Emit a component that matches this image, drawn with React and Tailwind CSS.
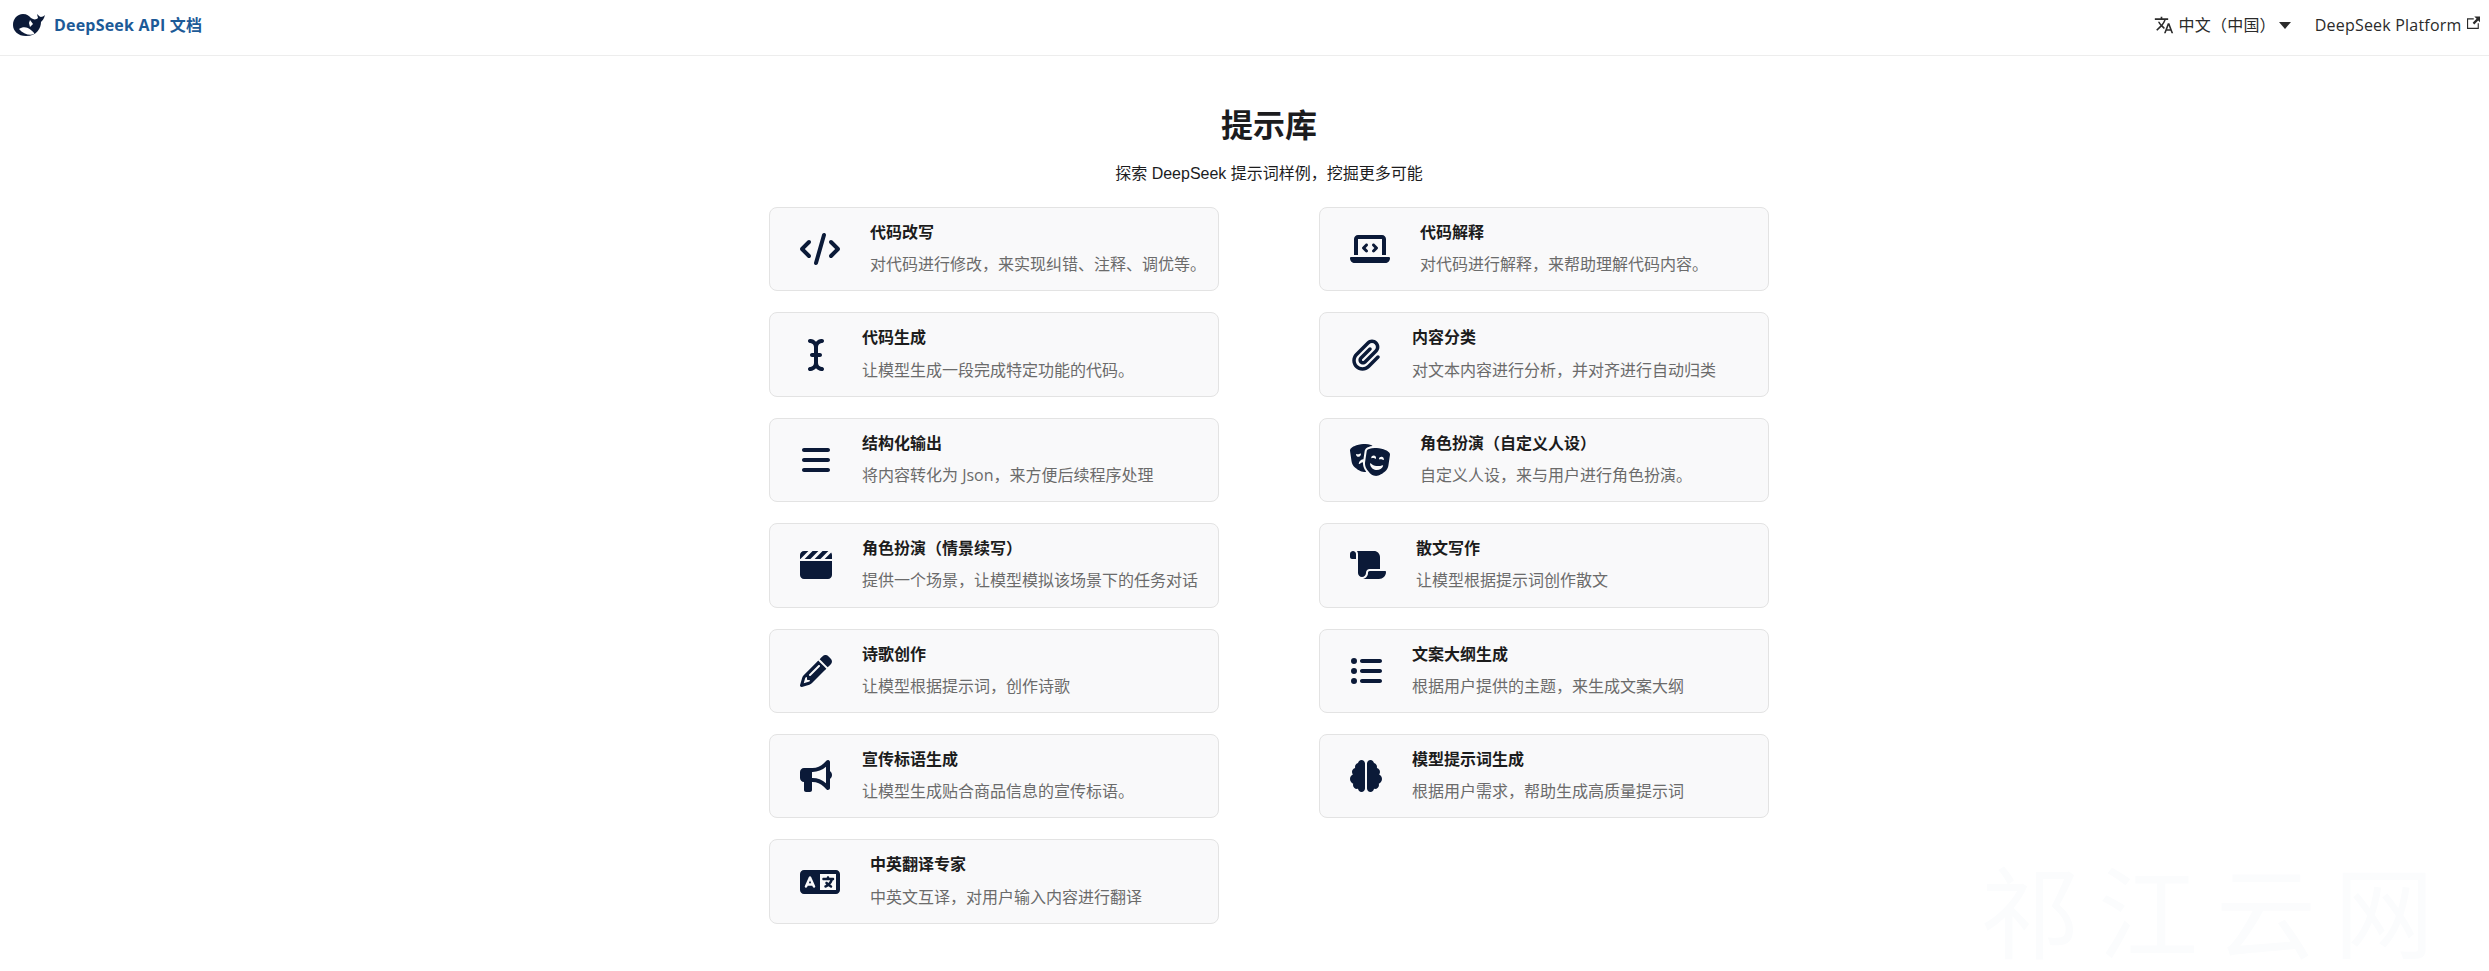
import { FaCode, FaLaptopCode, FaICursor, FaPaperclip, FaBars, FaMasksTheater, FaClapperboard, FaScroll, FaPencil, FaListUl, FaBullhorn, FaBrain, FaLanguage } from 'react-icons/fa6'

const prompts = [
  { icon: FaCode, w: 'w-[40px]', title: '代码改写', desc: '对代码进行修改，来实现纠错、注释、调优等。' },
  { icon: FaLaptopCode, w: 'w-[40px]', title: '代码解释', desc: '对代码进行解释，来帮助理解代码内容。' },
  { icon: FaICursor, w: 'w-[32px]', title: '代码生成', desc: '让模型生成一段完成特定功能的代码。' },
  { icon: FaPaperclip, w: 'w-[32px]', title: '内容分类', desc: '对文本内容进行分析，并对齐进行自动归类' },
  { icon: FaBars, w: 'w-[32px]', title: '结构化输出', desc: '将内容转化为 Json，来方便后续程序处理' },
  { icon: FaMasksTheater, w: 'w-[40px]', title: '角色扮演（自定义人设）', desc: '自定义人设，来与用户进行角色扮演。' },
  { icon: FaClapperboard, w: 'w-[32px]', title: '角色扮演（情景续写）', desc: '提供一个场景，让模型模拟该场景下的任务对话' },
  { icon: FaScroll, w: 'w-[36px]', title: '散文写作', desc: '让模型根据提示词创作散文' },
  { icon: FaPencil, w: 'w-[32px]', title: '诗歌创作', desc: '让模型根据提示词，创作诗歌' },
  { icon: FaListUl, w: 'w-[32px]', title: '文案大纲生成', desc: '根据用户提供的主题，来生成文案大纲' },
  { icon: FaBullhorn, w: 'w-[32px]', title: '宣传标语生成', desc: '让模型生成贴合商品信息的宣传标语。' },
  { icon: FaBrain, w: 'w-[32px]', title: '模型提示词生成', desc: '根据用户需求，帮助生成高质量提示词' },
  { icon: FaLanguage, w: 'w-[40px]', title: '中英翻译专家', desc: '中英文互译，对用户输入内容进行翻译' },
]

function Logo() {
  return (
    <svg viewBox="0 0 32 22" className="w-[32px] h-[22px] shrink-0">
      <path fill="#0b1a38" d="M0 11C0 5 4 0 10 0c4 0 6 2 8 4l2 1c2 1 4 0 5-1L24 0c2 2 3 3 4 3s3-1 4-2c-1 4-3 6-4 7 0 6-4 14-15 14C5 22 0 17 0 11z" />
      <path fill="#fff" d="M6 15c4-3 9-2 12 1 2 2 4 3 3 4-4 2-11 0-15-5z" />
      <path fill="#fff" d="M17 6l3 4-3 3-1-4z" />
    </svg>
  )
}

function Navbar() {
  return (
    <nav className="h-[56px] flex items-center justify-between pl-[13px] pr-[9px] pb-[5px] border-b border-[#ededed] bg-white">
      <a className="flex items-center gap-[9px] text-[16px] font-bold tracking-[0.2px] text-[#1c5a97]">
        <Logo />
        <span>DeepSeek API 文档</span>
      </a>
      <div className="flex items-center text-[16px] tracking-[0.2px] text-[#2b2b2b]">
        <div className="flex items-center">
          <svg viewBox="0 0 24 24" className="w-[20px] h-[20px] mr-[5px]" fill="currentColor">
            <path d="M12.87 15.07l-2.54-2.51.03-.03c1.74-1.94 2.98-4.17 3.71-6.53H17V4h-7V2H8v2H1v1.99h11.17C11.5 7.92 10.44 9.75 9 11.35 8.07 10.32 7.3 9.19 6.69 8h-2c.73 1.63 1.73 3.17 2.98 4.56l-5.09 5.02L4 19l5-5 3.11 3.11.76-2.04zM18.5 10h-2L12 22h2l1.12-3h4.75L21 22h2l-4.5-12zm-2.62 7l1.62-4.33L19.12 17h-3.24z" />
          </svg>
          <span>中文（中国）</span>
          <span className="ml-[3px] w-0 h-0 border-x-[6px] border-x-transparent border-t-[7px] border-t-[#2b2b2b]" />
        </div>
        <a className="flex items-center ml-[24px]">
          DeepSeek Platform
          <svg viewBox="0 0 24 24" className="w-[13.5px] h-[13.5px] ml-[5px] mb-[4px]" fill="currentColor">
            <path d="M21 13v10h-21v-19h12v2h-10v15h17v-8h2zm3-12h-10.988l4.035 4-6.977 7.07 2.828 2.828 6.977-7.07 4.125 4.172v-11z" />
          </svg>
        </a>
      </div>
    </nav>
  )
}

function PromptCard({ item }) {
  const Icon = item.icon
  return (
    <div className="flex items-center gap-[30px] px-[30px] py-[8px] bg-[#f9f9fa] border border-[#e3e3e3] rounded-[8px]">
      <Icon className={`${item.w} h-[32px] shrink-0 text-[#0b1a38]`} />
      <div className="min-w-0 leading-[32.2px] pb-[2px]">
        <div className="text-[16px] font-bold text-[#1c1c1c] whitespace-nowrap">{item.title}</div>
        <div className="text-[16px] text-[#6b6b6b] whitespace-nowrap">{item.desc}</div>
      </div>
    </div>
  )
}

export default function App() {
  return (
    <div className="relative h-[971px] overflow-hidden bg-white font-['Open_Sans','Noto_Sans_CJK_SC',sans-serif]">
      <Navbar />
      <main className="flex flex-col items-center pl-[49px] pt-[47px]">
        <h1 className="text-[32px] leading-[44px] font-bold text-[#1c1c1e]">提示库</h1>
        <p className="mt-[14px] text-[16px] leading-[26px] text-[#1c1c1e] font-['Liberation_Sans','Noto_Sans_CJK_SC',sans-serif]">探索 DeepSeek 提示词样例，挖掘更多可能</p>
        <div className="mt-[20px] grid grid-cols-[450px_450px] gap-x-[100px] gap-y-[21px]">
          {prompts.map((item) => <PromptCard key={item.title} item={item} />)}
        </div>
      </main>
      <div className="absolute left-[1980px] top-[862px] text-[100px] leading-none tracking-[18px] text-[#fbfcfd] whitespace-nowrap">祁江云网</div>
    </div>
  )
}
